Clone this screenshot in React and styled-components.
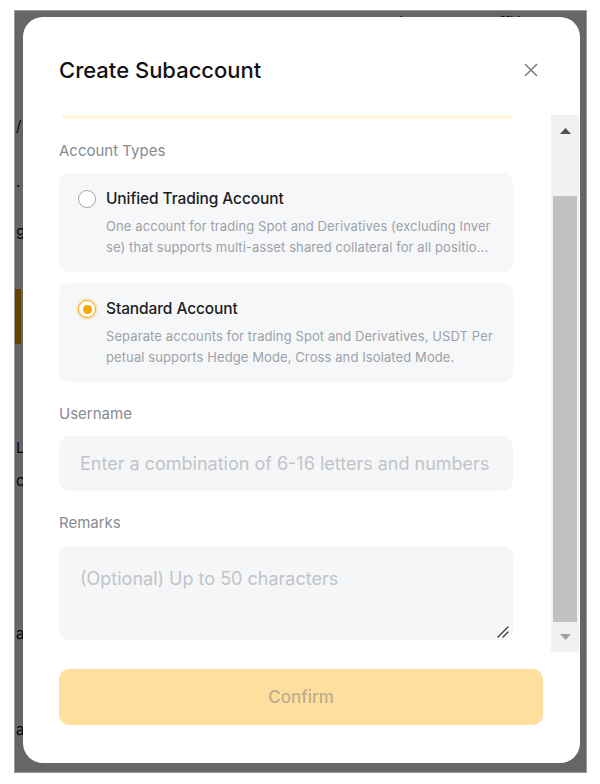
import React, { useState } from 'react';
import styled, { createGlobalStyle } from 'styled-components';

const GlobalStyle = createGlobalStyle`
  html, body {
    margin: 0;
    padding: 0;
    background: #ffffff;
    font-family: Inter, "Noto Sans", "Liberation Sans", sans-serif;
  }
  * { box-sizing: border-box; }
`;

const Page = styled.div`
  width: 600px;
  height: 784px;
  padding: 10px 13px 11px 14px;
`;

const Frame = styled.div`
  position: relative;
  height: 763px;
  overflow: hidden;
  background: #ffffff;
  border: 1px solid #9a9a9a;
`;

const BgNav = styled.div`
  display: flex;
  gap: 38px;
  padding: 2px 0 0 70px;
  font-size: 15px;
  color: #222;
  white-space: nowrap;
`;

const BgTab = styled.span`
  color: ${({ active }) => (active ? '#f7a600' : '#222')};
`;

const BgSide = styled.div`
  display: flex;
  flex-direction: column;
  align-items: flex-start;
  font-size: 15px;
  color: #111;
`;

const BgGlyph = styled.span`
  margin-top: ${({ gap }) => gap}px;
  line-height: 16px;
  margin-left: 1px;
`;

const BgBar = styled.div`
  margin-top: ${({ gap }) => gap}px;
  width: 6px;
  height: 55px;
  background: #f7a600;
`;

const Backdrop = styled.div`
  position: absolute;
  inset: 0;
  background: rgba(0, 0, 0, 0.6);
  padding: 6px 6px 9px 8px;
  display: flex;
`;

const Modal = styled.div`
  flex: 1;
  display: flex;
  flex-direction: column;
  background: #ffffff;
  border-radius: 20px;
  overflow: hidden;
`;

const Header = styled.div`
  height: 98px;
  display: flex;
  align-items: center;
  justify-content: space-between;
  padding: 8px 42px 0 36px;
`;

const Title = styled.h2`
  margin: 0;
  font-size: 22px;
  font-weight: 500;
  color: #121214;
  letter-spacing: 0;
`;

const CloseButton = styled.button`
  border: 0;
  background: none;
  padding: 0;
  width: 14px;
  height: 14px;
  display: flex;
  cursor: pointer;
`;

const Body = styled.div`
  height: 537px;
  display: flex;
  justify-content: space-between;
  padding-left: 36px;
  padding-right: 1px;
`;

const Content = styled.div`
  width: 454px;
  overflow: hidden;
  display: flex;
  flex-direction: column;
`;

const NoticeTail = styled.div`
  height: 4px;
  margin: 0 1px 0 3px;
  background: #fff4dc;
  border-radius: 0 0 6px 6px;
`;

const Label = styled.div`
  margin-top: ${({ gap }) => gap}px;
  margin-bottom: ${({ below }) => below}px;
  font-size: 15px;
  line-height: 20px;
  color: #878a92;
`;

const Cards = styled.div`
  display: flex;
  flex-direction: column;
  gap: 11px;
`;

const Card = styled.label`
  display: grid;
  grid-template-columns: 18px 1fr;
  column-gap: 10px;
  row-gap: 5px;
  padding: 14px 20px 14px 19px;
  background: #f6f7f9;
  border-radius: 10px;
  cursor: pointer;
`;

const Radio = styled.span`
  width: 18px;
  height: 18px;
  align-self: center;
  border-radius: 50%;
  border: 1.5px solid ${({ checked }) => (checked ? '#f7a600' : '#a4a7ad')};
  background: #ffffff;
  box-shadow: ${({ checked }) => (checked ? '0 0 0 2px rgba(247, 166, 0, 0.18)' : 'none')};
  display: flex;
  align-items: center;
  justify-content: center;

  &::after {
    content: '';
    width: 9px;
    height: 9px;
    border-radius: 50%;
    background: ${({ checked }) => (checked ? '#f7a600' : 'transparent')};
  }
`;

const CardTitle = styled.div`
  font-size: 15.5px;
  font-weight: 500;
  line-height: 24px;
  color: #1c1d21;
  letter-spacing: -0.1px;
`;

const CardDesc = styled.div`
  grid-column: 2;
  font-size: 13px;
  line-height: 21px;
  letter-spacing: 0.1px;
  color: #9ea1a8;
  white-space: nowrap;
`;

const Input = styled.input`
  height: 55px;
  width: 100%;
  border: 0;
  outline: none;
  border-radius: 10px;
  background: #f5f6f7;
  padding: 0 20px 0 21px;
  font-family: inherit;
  font-size: 18px;
  color: #121214;

  &::placeholder { color: #c1c4c9; }
`;

const TextAreaBox = styled.div`
  position: relative;
`;

const TextArea = styled.textarea`
  display: block;
  height: 94px;
  width: 100%;
  border: 0;
  outline: none;
  border-radius: 10px;
  background: #f5f6f7;
  padding: 21px 20px 0 21px;
  font-family: inherit;
  font-size: 18px;
  line-height: 24px;
  color: #121214;
  resize: none;

  &::placeholder { color: #c1c4c9; }
`;

const ResizeGrip = styled.span`
  position: absolute;
  right: 3px;
  bottom: 2px;
  width: 14px;
  height: 14px;
  display: flex;
  pointer-events: none;
`;

const Scrollbar = styled.div`
  width: 28px;
  display: flex;
  flex-direction: column;
  background: #f1f1f1;
`;

const ScrollArrow = styled.div`
  height: ${({ h }) => h}px;
  display: flex;
  align-items: center;
  justify-content: center;
`;

const Track = styled.div`
  flex: 1;
  padding: 0 2px;
`;

const Thumb = styled.div`
  background: #c1c1c1;
`;

const Footer = styled.div`
  padding: 17px 37px 0 36px;
`;

const ConfirmButton = styled.button`
  width: 100%;
  height: 56px;
  border: 0;
  border-radius: 10px;
  background: #fedf9e;
  font-family: inherit;
  font-size: 17px;
  font-weight: 500;
  color: #bcae8e;
  cursor: not-allowed;
`;

const accountTypes = [
  {
    id: 'unified',
    title: 'Unified Trading Account',
    lines: [
      'One account for trading Spot and Derivatives (excluding Inver',
      'se) that supports multi-asset shared collateral for all positio...',
    ],
  },
  {
    id: 'standard',
    title: 'Standard Account',
    lines: [
      'Separate accounts for trading Spot and Derivatives, USDT Per',
      'petual supports Hedge Mode, Cross and Isolated Mode.',
    ],
  },
];

const CloseIcon = () => (
  <svg width="14" height="14" viewBox="0 0 14 14" fill="none">
    <path d="M1 1L13 13M13 1L1 13" stroke="#7c7f86" strokeWidth="1.6" />
  </svg>
);

const GripIcon = () => (
  <svg width="14" height="14" viewBox="0 0 14 14" fill="none">
    <path d="M2 13L12 3M7 13L12 8" stroke="#3a3a3a" strokeWidth="1.3" strokeLinecap="round" />
  </svg>
);

const Triangle = ({ up, color }) => (
  <svg width="11" height="6" viewBox="0 0 11 6">
    <path d={up ? 'M0 6L5.5 0L11 6Z' : 'M0 0L5.5 6L11 0Z'} fill={color} />
  </svg>
);

const App = () => {
  const [type, setType] = useState('standard');

  return (
    <>
      <GlobalStyle />
      <Page>
        <Frame>
          <BgNav>
            <BgTab active>Subaccount</BgTab>
            <BgTab>API Management</BgTab>
            <BgTab>Trading Fee</BgTab>
            <BgTab>Affiliate</BgTab>
          </BgNav>
          <BgSide>
            <BgGlyph gap={86}>/</BgGlyph>
            <BgGlyph gap={40}>.</BgGlyph>
            <BgGlyph gap={36}>9</BgGlyph>
            <BgBar gap={47} />
            <BgGlyph gap={96}>L</BgGlyph>
            <BgGlyph gap={17}>c</BgGlyph>
            <BgGlyph gap={137}>a</BgGlyph>
            <BgGlyph gap={80}>a</BgGlyph>
          </BgSide>

          <Backdrop>
            <Modal>
              <Header>
                <Title>Create Subaccount</Title>
                <CloseButton aria-label="Close">
                  <CloseIcon />
                </CloseButton>
              </Header>

              <Body>
                <Content>
                  <NoticeTail />
                  <Label gap={22} below={12}>Account Types</Label>
                  <Cards>
                    {accountTypes.map((item) => (
                      <Card key={item.id} onClick={() => setType(item.id)}>
                        <Radio checked={type === item.id} />
                        <CardTitle>{item.title}</CardTitle>
                        <CardDesc>
                          {item.lines.map((line) => (
                            <div key={line}>{line}</div>
                          ))}
                        </CardDesc>
                      </Card>
                    ))}
                  </Cards>

                  <Label gap={22} below={12}>Username</Label>
                  <Input placeholder="Enter a combination of 6-16 letters and numbers" />

                  <Label gap={22} below={13}>Remarks</Label>
                  <TextAreaBox>
                    <TextArea placeholder="(Optional) Up to 50 characters" />
                    <ResizeGrip>
                      <GripIcon />
                    </ResizeGrip>
                  </TextAreaBox>
                </Content>

                <Scrollbar>
                  <ScrollArrow h={32}>
                    <Triangle up color="#505050" />
                  </ScrollArrow>
                  <Track>
                    <Thumb style={{ marginTop: 50, height: 426 }} />
                  </Track>
                  <ScrollArrow h={30}>
                    <Triangle color="#a3a3a3" />
                  </ScrollArrow>
                </Scrollbar>
              </Body>

              <Footer>
                <ConfirmButton disabled>Confirm</ConfirmButton>
              </Footer>
            </Modal>
          </Backdrop>
        </Frame>
      </Page>
    </>
  );
};

export default App;
